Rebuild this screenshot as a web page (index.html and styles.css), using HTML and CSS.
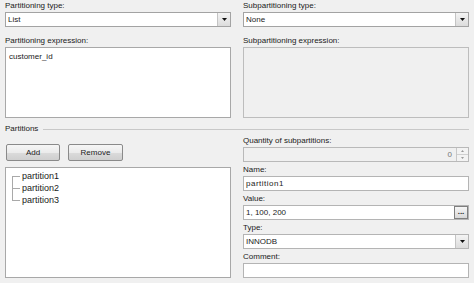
FILE: index.html
```html
<!DOCTYPE html>
<html>
<head>
<meta charset="utf-8">
<link rel="stylesheet" href="styles.css">
</head>
<body>
<div class="page">
  <div class="top">
    <div class="col">
      <div class="lbl lbl-first">Partitioning type:</div>
      <div class="combo">
        <span class="combo-text">List</span>
        <span class="drop"><svg width="5" height="3" viewBox="0 0 5 3"><path d="M0 0H5L2.5 3Z" fill="#111"/></svg></span>
      </div>
      <div class="lbl lbl-gap">Partitioning expression:</div>
      <div class="area">customer_id</div>
    </div>
    <div class="col">
      <div class="lbl lbl-first">Subpartitioning type:</div>
      <div class="combo">
        <span class="combo-text">None</span>
        <span class="drop"><svg width="5" height="3" viewBox="0 0 5 3"><path d="M0 0H5L2.5 3Z" fill="#111"/></svg></span>
      </div>
      <div class="lbl lbl-gap">Subpartitioning expression:</div>
      <div class="area area-disabled"></div>
    </div>
  </div>

  <div class="group-head">
    <span class="group-title">Partitions</span>
    <span class="rule"></span>
  </div>

  <div class="bottom">
    <div class="col">
      <div class="btns">
        <button class="btn btn-add">Add</button>
        <button class="btn btn-remove">Remove</button>
      </div>
      <div class="tree">
        <div class="item first">partition1</div>
        <div class="item mid">partition2</div>
        <div class="item last">partition3</div>
      </div>
    </div>
    <div class="col">
      <div class="lbl">Quantity of subpartitions:</div>
      <div class="field spin">
        <span class="spin-val">0</span>
        <span class="spin-btns">
          <span class="spin-b"><svg width="3" height="2" viewBox="0 0 3 2"><path d="M0 2H3L1.5 0Z" fill="#9a9a9a"/></svg></span>
          <span class="spin-b"><svg width="3" height="2" viewBox="0 0 3 2"><path d="M0 0H3L1.5 2Z" fill="#9a9a9a"/></svg></span>
        </span>
      </div>
      <div class="lbl">Name:</div>
      <div class="field text name-text">partition1</div>
      <div class="lbl">Value:</div>
      <div class="field text with-btn">
        <span class="field-text">1, 100, 200</span>
        <span class="dots">...</span>
      </div>
      <div class="lbl">Type:</div>
      <div class="field combo combo-small">
        <span class="combo-text">INNODB</span>
        <span class="drop"><svg width="5" height="3" viewBox="0 0 5 3"><path d="M0 0H5L2.5 3Z" fill="#111"/></svg></span>
      </div>
      <div class="lbl">Comment:</div>
      <div class="field text"></div>
    </div>
  </div>
</div>
</body>
</html>
```

FILE: styles.css
```css
* { box-sizing: border-box; }

html, body {
  margin: 0;
  padding: 0;
}

body {
  width: 474px;
  height: 283px;
  overflow: hidden;
  background: #f0f0f0;
  font-family: "Liberation Sans", Arial, sans-serif;
  font-size: 8px;
  color: #1a1a1a;
}

.page {
  padding: 0 5px;
}

.top,
.bottom {
  display: grid;
  grid-template-columns: 226px 226px;
  column-gap: 12px;
}

.col {
  display: flex;
  flex-direction: column;
  min-width: 0;
}

.lbl {
  height: 13px;
  line-height: 13px;
  white-space: nowrap;
}

.lbl-first {
  height: 12px;
  line-height: 12px;
}

.lbl-gap {
  margin-top: 7px;
}

.combo {
  display: flex;
  align-items: stretch;
  height: 15px;
  border: 1px solid #a3a3a3;
  background: #fff;
}

.combo-text {
  flex: 1;
  padding-left: 2px;
  line-height: 13px;
}

.drop {
  width: 13px;
  margin: 0;
  border-left: 1px solid #c4c4c4;
  background: linear-gradient(#f4f4f4, #dcdcdc);
  display: flex;
  align-items: center;
  justify-content: center;
}

.area {
  height: 71px;
  border: 1px solid #a8a8a8;
  background: #fff;
  padding: 3px 3px;
  line-height: 11px;
}

.area-disabled {
  background: #f0f0f0;
  border-color: #bdbdbd;
}

.group-head {
  display: flex;
  align-items: center;
  height: 12px;
  margin-top: 4px;
}

.group-title {
  white-space: nowrap;
}

.rule {
  flex: 1;
  height: 1px;
  margin-left: 5px;
  margin-top: 2px;
  background: #c8c8c8;
}

.btns {
  display: flex;
  gap: 8px;
  margin-top: 10px;
  padding-left: 1px;
}

.btn {
  height: 17px;
  padding: 0;
  border: 1px solid #8a8a8a;
  border-radius: 2px;
  background: linear-gradient(#f6f6f6 0%, #ebebeb 50%, #dbdbdb 51%, #cfcfcf 100%);
  font-family: inherit;
  font-size: 8px;
  color: #1a1a1a;
}

.btn-add { width: 54px; }
.btn-remove { width: 55px; }

.tree {
  margin-top: 6px;
  height: 111px;
  border: 1px solid #a8a8a8;
  background: #fff;
  padding-top: 2px;
  font-size: 9px;
}

.item {
  position: relative;
  height: 12px;
  line-height: 12px;
  padding-left: 16px;
}

.item::before {
  content: "";
  position: absolute;
  left: 6px;
  top: 6px;
  width: 8px;
  height: 1px;
  background: #a9a9a9;
}

.item::after {
  content: "";
  position: absolute;
  left: 6px;
  width: 1px;
  background: #a9a9a9;
}

.item.first::after { top: 6px; height: 6px; }
.item.mid::after { top: 0; height: 12px; }
.item.last::after { top: 0; height: 7px; }

.field {
  height: 15px;
  margin-bottom: 1px;
  border: 1px solid #b4b4b4;
  background: #fff;
  line-height: 13px;
}

.text {
  padding-left: 2px;
}

.name-text {
  letter-spacing: 0.5px;
}

.with-btn {
  display: flex;
  padding-right: 0;
}

.field-text {
  flex: 1;
}

.dots {
  width: 14px;
  margin: 0;
  border: 1px solid #7f7f7f;
  background: linear-gradient(#f6f6f6, #d8d8d8);
  text-align: center;
  line-height: 9px;
  font-weight: bold;
  color: #222;
}

.spin {
  display: flex;
  justify-content: flex-end;
  background: #f0f0f0;
  border-color: #b9b9b9;
  color: #777;
}

.spin-val {
  padding-right: 4px;
}

.spin-btns {
  display: flex;
  flex-direction: column;
  width: 12px;
  border-left: 1px solid #c8c8c8;
}

.spin-b {
  flex: 1;
  display: flex;
  align-items: center;
  justify-content: center;
  background: #f3f3f3;
}

.spin-b + .spin-b {
  border-top: 1px solid #d0d0d0;
}

.combo-small {
  display: flex;
  padding: 0;
}
```
